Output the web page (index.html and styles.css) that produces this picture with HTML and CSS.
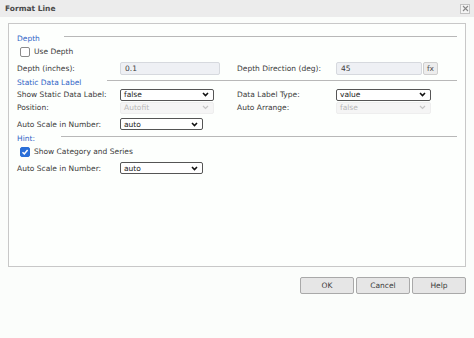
FILE: index.html
```html
<!DOCTYPE html>
<html lang="en">

<head>
    <meta charset="UTF-8">
    <title>Format Line</title>
    <link rel="stylesheet" href="styles.css">
</head>

<body>
    <div class="dialog">
        <div class="titlebar">
            <span class="title">Format Line</span>
            <span class="close">
                <svg width="7" height="7" viewBox="0 0 7 7"><path d="M1 1 L6 6 M6 1 L1 6" stroke="#888" stroke-width="1.1" fill="none"/></svg>
            </span>
        </div>

        <div class="panel">
            <div class="section-head"><span>Depth</span></div>
            <div class="check-row">
                <span class="checkbox"></span>
                <span>Use Depth</span>
            </div>
            <div class="grid-row row-input">
                <span class="label">Depth (inches):</span>
                <span class="input w100">0.1</span>
                <span class="label">Depth Direction (deg):</span>
                <span class="input-fx">
                    <span class="input w86">45</span>
                    <span class="fx">fx</span>
                </span>
            </div>

            <div class="section-head head-static"><span>Static Data Label</span></div>
            <div class="grid-row row-select">
                <span class="label">Show Static Data Label:</span>
                <span class="select w94"><span>false</span><svg class="chev" width="7" height="5" viewBox="0 0 7 5"><path d="M1 1 L3.5 3.5 L6 1" stroke="#111" stroke-width="1.6" fill="none"/></svg></span>
                <span class="label">Data Label Type:</span>
                <span class="select w95"><span>value</span><svg class="chev" width="7" height="5" viewBox="0 0 7 5"><path d="M1 1 L3.5 3.5 L6 1" stroke="#111" stroke-width="1.6" fill="none"/></svg></span>
            </div>
            <div class="grid-row row-select">
                <span class="label">Position:</span>
                <span class="select w94 disabled"><span>Autofit</span><svg class="chev" width="7" height="5" viewBox="0 0 7 5"><path d="M1 1 L3.5 3.5 L6 1" stroke="#c4c4c4" stroke-width="1.2" fill="none"/></svg></span>
                <span class="label">Auto Arrange:</span>
                <span class="select w95 disabled"><span>false</span><svg class="chev" width="7" height="5" viewBox="0 0 7 5"><path d="M1 1 L3.5 3.5 L6 1" stroke="#c4c4c4" stroke-width="1.2" fill="none"/></svg></span>
            </div>
            <div class="grid-row row-select row-gap">
                <span class="label">Auto Scale in Number:</span>
                <span class="select w83"><span>auto</span><svg class="chev" width="7" height="5" viewBox="0 0 7 5"><path d="M1 1 L3.5 3.5 L6 1" stroke="#111" stroke-width="1.6" fill="none"/></svg></span>
            </div>

            <div class="section-head head-hint"><span>Hint:</span></div>
            <div class="check-row">
                <span class="checkbox checked">
                    <svg width="8" height="8" viewBox="0 0 8 8"><path d="M1.5 4.2 L3.3 6 L6.6 2" stroke="#fff" stroke-width="1.5" fill="none"/></svg>
                </span>
                <span>Show Category and Series</span>
            </div>
            <div class="grid-row row-select row-gap">
                <span class="label">Auto Scale in Number:</span>
                <span class="select w83"><span>auto</span><svg class="chev" width="7" height="5" viewBox="0 0 7 5"><path d="M1 1 L3.5 3.5 L6 1" stroke="#111" stroke-width="1.6" fill="none"/></svg></span>
            </div>
        </div>

        <div class="buttons">
            <button class="btn">OK</button>
            <button class="btn">Cancel</button>
            <button class="btn">Help</button>
        </div>
    </div>
</body>

</html>
```

FILE: styles.css
```css
* {
    margin: 0;
    padding: 0;
    box-sizing: border-box;
}

body {
    width: 474px;
    height: 338px;
    background: #fbfdfb;
    font-family: "DejaVu Sans", Verdana, sans-serif;
    font-size: 7.5px;
    color: #3a3a3a;
}

.titlebar {
    height: 17px;
    background: #ececec;
    display: flex;
    align-items: center;
    justify-content: space-between;
    padding: 0 4px 0 5px;
}

.title {
    font-weight: bold;
    color: #4a4a4a;
}

.close {
    width: 10px;
    height: 10px;
    border: 1px solid #c2c2c2;
    background: #f4f4f4;
    display: flex;
    align-items: center;
    justify-content: center;
}

.panel {
    margin: 6px 8px 0 8px;
    height: 244px;
    border: 1px solid #c8c8c8;
    padding: 7px 8px 0 8px;
    background: #fdfffd;
}

.section-head {
    display: flex;
    align-items: center;
    gap: 24px;
    height: 14px;
    color: #3064c6;
}

.section-head::after {
    content: "";
    flex: 1;
    border-top: 1px solid #b8b8b8;
    margin-top: -3px;
}

.head-static {
    height: 12px;
    gap: 26px;
}

.head-hint {
    gap: 26px;
}

.check-row {
    display: flex;
    align-items: center;
    gap: 4px;
    height: 13px;
    padding-left: 3px;
}

.checkbox {
    width: 10px;
    height: 10px;
    border: 1px solid #8a8a8a;
    border-radius: 2px;
    background: #fff;
    display: flex;
    align-items: center;
    justify-content: center;
}

.checkbox.checked {
    background: #2b6fd8;
    border-color: #2b6fd8;
}

.grid-row {
    display: grid;
    grid-template-columns: 103px 117px 99px auto;
    align-items: center;
}

.row-input {
    margin-top: 3px;
    height: 15px;
}

.row-select {
    height: 13px;
}

.row-gap {
    margin-top: 3px;
    height: 14px;
}

.input {
    display: block;
    height: 13px;
    line-height: 11px;
    padding-left: 4px;
    border: 1px solid #d6d9de;
    border-radius: 2px;
    background: #eef0f4;
}

.input-fx {
    display: flex;
    align-items: center;
    gap: 1px;
}

.fx {
    width: 15px;
    height: 13px;
    line-height: 11px;
    text-align: center;
    border: 1px solid #cfcfcf;
    border-radius: 2px;
    background: #ededed;
    color: #555;
}

.w100 { width: 100px; }
.w86 { width: 86px; }
.w94 { width: 94px; }
.w95 { width: 95px; }
.w83 { width: 83px; }

.select {
    display: flex;
    align-items: center;
    justify-content: space-between;
    height: 12px;
    padding: 0 4px 0 3px;
    border: 1px solid #555;
    border-radius: 2px;
    background: #fff;
    color: #222;
}

.select.disabled {
    border-color: #eeeeee;
    background: #f5f5f5;
    color: #b8b8b8;
}

.buttons {
    display: flex;
    justify-content: flex-end;
    gap: 2px;
    margin-top: 10px;
    padding-right: 8px;
}

.btn {
    width: 54px;
    height: 17px;
    border: 1px solid #a9a9a9;
    border-radius: 2px;
    background: #e6e6e6;
    font-family: "DejaVu Sans", Verdana, sans-serif;
    font-size: 7.5px;
    color: #3a3a3a;
}
```
